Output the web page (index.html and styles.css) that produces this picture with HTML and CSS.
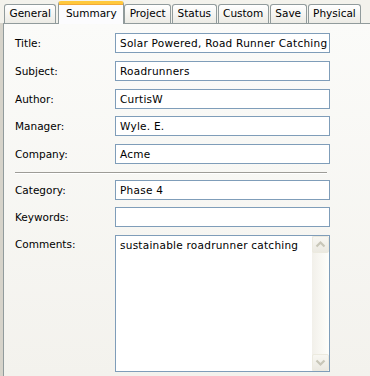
FILE: index.html
```html
<html>
<head>
    <title>Properties</title>
    <link rel="stylesheet" href="styles.css">
</head>

<body>
<div class="tabs">
    <div class="tab">General</div>
    <div class="tab active">Summary</div>
    <div class="tab">Project</div>
    <div class="tab">Status</div>
    <div class="tab">Custom</div>
    <div class="tab">Save</div>
    <div class="tab">Physical</div>
</div>

<div class="panel">
    <div class="form">
        <div class="label">Title:</div>
        <div class="field">Solar Powered, Road Runner Catching</div>

        <div class="label">Subject:</div>
        <div class="field">Roadrunners</div>

        <div class="label">Author:</div>
        <div class="field">CurtisW</div>

        <div class="label">Manager:</div>
        <div class="field">Wyle. E.</div>

        <div class="label">Company:</div>
        <div class="field">Acme</div>

        <div class="sep"></div>

        <div class="label">Category:</div>
        <div class="field">Phase 4</div>

        <div class="label">Keywords:</div>
        <div class="field"></div>

        <div class="label top">Comments:</div>
        <div class="memo">
            <div class="memoText">sustainable roadrunner catching</div>
            <div class="scrollbar">
                <div class="sbButton">
                    <svg width="15" height="15" viewBox="0 0 15 15"><polyline points="3.5,9.5 7.5,5.5 11.5,9.5" fill="none" stroke="#c8c6b8" stroke-width="2.2"/></svg>
                </div>
                <div class="sbTrack"></div>
                <div class="sbButton">
                    <svg width="15" height="15" viewBox="0 0 15 15"><polyline points="3.5,5.5 7.5,9.5 11.5,5.5" fill="none" stroke="#c8c6b8" stroke-width="2.2"/></svg>
                </div>
            </div>
        </div>
    </div>
</div>
</body>
</html>
```

FILE: styles.css
```css
body{
    margin: 0;
    background-color: #f3f2ec;
    font-family: "DejaVu Sans", Verdana, sans-serif;
    font-size: 10.5px;
    color: #000;
    overflow: hidden;
}

.tabs{
    display: flex;
    align-items: flex-end;
    height: 23px;
    padding-left: 4px;
}

.tab{
    box-sizing: border-box;
    height: 19px;
    padding: 0 4.5px;
    margin-right: 1px;
    line-height: 17px;
    border: 1px solid #919b9c;
    border-bottom: none;
    border-radius: 3px 3px 0 0;
    background: linear-gradient(#ffffff, #ecebe5);
}

.tab.active{
    position: relative;
    z-index: 1;
    height: 23px;
    margin: 0 0 -1px 1px;
    padding: 0 6.5px;
    line-height: 19px;
    border-top: 3px solid #ffc83c;
    box-shadow: inset 0 1px 0 #f2a93a;
    background: #fcfcfe;
}

.panel{
    box-sizing: border-box;
    height: calc(100vh - 23px);
    margin-left: 3px;
    border-top: 1px solid #919b9c;
    border-left: 1px solid #919b9c;
    box-shadow: -3px 0 0 #d6d3ca;
    background: linear-gradient(#fbfbf9, #f3f2ed);
}

.form{
    display: grid;
    grid-template-columns: 100px 215px;
    row-gap: 7.75px;
    align-items: center;
    padding: 9px 0 0 11px;
}

.label{
    white-space: nowrap;
}

.label.top{
    align-self: start;
    padding-top: 3px;
}

.field{
    box-sizing: border-box;
    height: 20px;
    padding: 0 4px;
    line-height: 18px;
    letter-spacing: 0.25px;
    border: 1px solid #7f9db9;
    background-color: #fff;
    white-space: nowrap;
    overflow: hidden;
}

.sep{
    grid-column: 1 / 3;
    height: 0;
    margin: 0 3px -2.5px 0;
    border-top: 1px solid #9d9c97;
    border-bottom: 1px solid #fff;
}

.memo{
    box-sizing: border-box;
    display: flex;
    height: 137px;
    border: 1px solid #7f9db9;
    background-color: #fff;
}

.memoText{
    flex: 1;
    padding: 3px 4px;
    line-height: 13px;
    letter-spacing: 0.25px;
}

.scrollbar{
    display: flex;
    flex-direction: column;
    width: 17px;
    background: linear-gradient(to right, #f2f0ea, #fefefb);
}

.sbButton{
    box-sizing: border-box;
    width: 17px;
    height: 17px;
    border: 1px solid #eceadf;
    border-radius: 2px;
    background: linear-gradient(#f8f7f2, #ebe9e1);
}

.sbButton svg{
    display: block;
}

.sbTrack{
    flex: 1;
}
```
